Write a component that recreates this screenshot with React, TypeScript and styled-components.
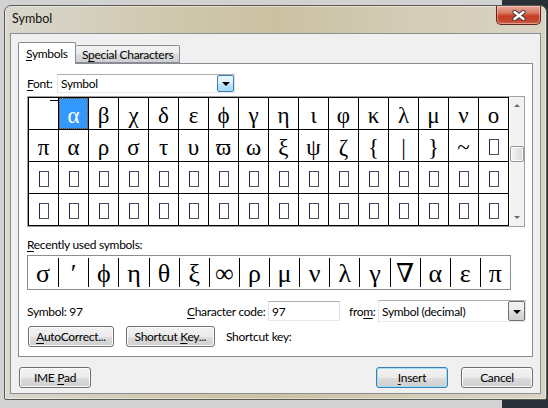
import React from 'react';
import styled, { createGlobalStyle } from 'styled-components';

const GlobalStyle = createGlobalStyle`
  html, body { margin: 0; padding: 0; }
  body {
    width: 548px;
    height: 408px;
    overflow: hidden;
    background: linear-gradient(to right, #d2d2d2 0, #d2d2d2 502px, #2a3038 502px);
    font-family: "Segoe UI", Lato, "Noto Sans", sans-serif;
    font-size: 12px;
    letter-spacing: -0.3px;
    color: #000;
  }
  * { box-sizing: border-box; }
`;

const Window = styled.div`
  margin: 5px 0 0 4px;
  width: 543px;
  height: 395px;
  border: 1px solid #5a5a52;
  border-radius: 7px 7px 2px 2px;
  background: linear-gradient(to right, #d9d7cf 0%, #d0c8ad 30%, #cbc1a2 50%, #d3ccb6 75%, #d8d3c3 100%);
  padding: 0 5px 5px 5px;
  display: flex;
  flex-direction: column;
  box-shadow: inset 0 0 0 1px rgba(255, 255, 255, 0.45);
`;

const TitleBar = styled.div`
  height: 27px;
  display: flex;
  justify-content: space-between;
  align-items: flex-start;
`;

const Title = styled.div`
  padding: 5px 0 0 2px;
  font-size: 12.5px;
  letter-spacing: 0;
  color: #111;
`;

const CloseButton = styled.div`
  width: 45px;
  height: 19px;
  border: 1px solid #5e2418;
  border-top: none;
  border-radius: 0 0 5px 5px;
  background: linear-gradient(#e9ab9b 0%, #d87561 40%, #c63d22 55%, #c24a31 85%, #d66e55 100%);
  box-shadow: inset 0 0 0 1px rgba(255, 220, 210, 0.45);
  display: flex;
  align-items: center;
  justify-content: center;
`;

const Client = styled.div`
  flex: 1;
  border: 1px solid #8b8e92;
  background: #f0f0f0;
  padding: 8px 7px 0 7px;
  display: flex;
  flex-direction: column;
`;

const TabStrip = styled.div`
  display: flex;
  align-items: flex-end;
  height: 21px;
  position: relative;
  z-index: 1;
`;

const Tab = styled.div<{ $active?: boolean }>`
  height: ${p => (p.$active ? 22 : 18)}px;
  margin-bottom: ${p => (p.$active ? -1 : 0)}px;
  padding: ${p => (p.$active ? '3px 0 0 7px' : '1px 0 0 6px')};
  width: ${p => (p.$active ? 58 : 104)}px;
  border: 1px solid #898c95;
  border-bottom: ${p => (p.$active ? 'none' : '1px solid #898c95')};
  border-left: ${p => (p.$active ? '1px solid #898c95' : 'none')};
  border-radius: 2px 2px 0 0;
  background: ${p => (p.$active ? '#ffffff' : 'linear-gradient(#f3f3f3, #ebebeb 50%, #dddddd 51%, #cfcfcf)')};
  white-space: nowrap;
`;

const Panel = styled.div`
  height: 294px;
  border: 1px solid #898c95;
  background: #fff;
  padding: 10px 0 0 8px;
  display: flex;
  flex-direction: column;
`;

const U = styled.span`
  text-decoration: underline;
  text-underline-offset: 2px;
`;

const FontRow = styled.div`
  display: flex;
  align-items: center;
  height: 19px;
`;

const FieldLabel = styled.div<{ $w: number }>`
  width: ${p => p.$w}px;
  white-space: nowrap;
`;

const Combo = styled.div<{ $w: number; $h: number }>`
  width: ${p => p.$w}px;
  height: ${p => p.$h}px;
  border: 1px solid #abadb3;
  border-color: #abadb3 #dbdfe6 #e3e9ef #e2e3ea;
  background: #fff;
  display: flex;
  align-items: center;
  padding-left: 3px;
  justify-content: space-between;
`;

const DropButton = styled.div<{ $hot?: boolean }>`
  width: 17px;
  height: 100%;
  border: 1px solid ${p => (p.$hot ? '#3c7fb1' : '#707070')};
  border-radius: 2px;
  background: ${p =>
    p.$hot
      ? 'linear-gradient(#eaf6fd, #d9f0fc 50%, #bee6fd 51%, #a7d9f5)'
      : 'linear-gradient(#f2f2f2, #ebebeb 50%, #dddddd 51%, #cfcfcf)'};
  display: flex;
  align-items: center;
  justify-content: center;
`;

const Arrow = styled.div`
  width: 0;
  height: 0;
  border-left: 4px solid transparent;
  border-right: 4px solid transparent;
  border-top: 4px solid #000;
  margin-top: 1px;
`;

const GridBox = styled.div`
  margin-top: 3px;
  width: 498px;
  height: 131px;
  border: 1px solid #a0a0a0;
  display: flex;
`;

const CharGrid = styled.div`
  display: grid;
  grid-template-columns: repeat(16, 29px);
  grid-template-rows: repeat(4, 31px);
  gap: 1px;
  padding: 1px;
  background: #000;
  height: 129px;
`;

const Cell = styled.div<{ $selected?: boolean; $corner?: boolean }>`
  background: ${p => (p.$selected ? '#3399ff' : '#fff')};
  color: ${p => (p.$selected ? '#fff' : '#000')};
  border: ${p => (p.$selected ? '1px dotted #7a4a10' : 'none')};
  display: flex;
  align-items: ${p => (p.$corner ? 'flex-start' : 'center')};
  justify-content: ${p => (p.$corner ? 'flex-end' : 'center')};
  padding-top: ${p => (p.$corner ? 2 : 3)}px;
  font-family: "Liberation Serif", "DejaVu Serif", serif;
  font-size: 23px;
  letter-spacing: 0;
  line-height: 1;
`;

/* the radical-extender glyph: a short rule along the top edge */
const RadicalExtender = styled.span`
  display: block;
  width: 8px;
  height: 0;
  border-top: 1px solid #000;
`;

const NoGlyph = styled.span`
  display: block;
  width: 10px;
  height: 16px;
  border: 1px solid #4a4768;
  border-left-color: #2b2450;
  border-bottom-color: #5b4f3a;
`;

const ScrollBar = styled.div`
  width: 15px;
  margin-left: 1px;
  background: #f2f2f2;
  display: flex;
  flex-direction: column;
  align-items: stretch;
`;

const ScrollArrow = styled.div<{ $down?: boolean }>`
  height: 17px;
  display: flex;
  align-items: center;
  justify-content: center;
  &::after {
    content: '';
    width: 0;
    height: 0;
    border-left: 3px solid transparent;
    border-right: 3px solid transparent;
    ${p => (p.$down ? 'border-top: 3px solid #6b6b6b;' : 'border-bottom: 3px solid #6b6b6b;')}
  }
`;

const ScrollTrack = styled.div`
  flex: 1;
  display: flex;
  flex-direction: column;
`;

const Thumb = styled.div`
  height: 16px;
  border: 1px solid #979797;
  border-radius: 2px;
  background: linear-gradient(to right, #f4f4f4, #e8e8e8 50%, #d6d6d6);
  box-shadow: inset 0 0 0 1px #fcfcfc;
`;

const SectionLabel = styled.div`
  margin-top: 10px;
  height: 16px;
  line-height: 16px;
`;

const RecentBox = styled.div`
  margin-top: 2px;
  width: 484px;
  height: 35px;
  border: 1px solid #8e8e8e;
  display: grid;
  grid-template-columns: repeat(16, 1fr);
  padding: 2px 0;
`;

const RecentCell = styled.div<{ $first?: boolean }>`
  border-left: ${p => (p.$first ? 'none' : '1px solid #000')};
  display: flex;
  align-items: center;
  justify-content: center;
  padding-top: 2px;
  font-family: "Liberation Serif", "DejaVu Serif", serif;
  font-size: 26px;
  letter-spacing: 0;
  line-height: 1;
`;

const InfoRow = styled.div`
  margin-top: 10px;
  height: 22px;
  display: flex;
  align-items: center;
`;

const TextInput = styled.div<{ $w: number }>`
  width: ${p => p.$w}px;
  height: 20px;
  border: 1px solid #abadb3;
  border-color: #abadb3 #dbdfe6 #e3e9ef #e2e3ea;
  background: #fff;
  padding-left: 3px;
  display: flex;
  align-items: center;
  margin-right: 9px;
`;

const ButtonRow = styled.div`
  margin-top: 4px;
  height: 21px;
  display: flex;
  align-items: center;
`;

const Button = styled.div<{ $w: number; $default?: boolean; $gap?: number; $left?: number }>`
  width: ${p => p.$w}px;
  height: 21px;
  margin-right: ${p => p.$gap ?? 0}px;
  margin-left: ${p => p.$left ?? 0}px;
  border: 1px solid ${p => (p.$default ? '#3c7fb1' : '#707070')};
  border-radius: 3px;
  background: linear-gradient(#f2f2f2 0%, #ebebeb 50%, #dddddd 51%, #cfcfcf 100%);
  box-shadow: inset 0 0 0 1px ${p => (p.$default ? '#9fdff8' : '#fbfbfb')};
  display: flex;
  align-items: center;
  justify-content: center;
  white-space: nowrap;
`;

const Footer = styled.div`
  margin-top: 10px;
  padding-left: 1px;
  display: flex;
  align-items: center;
`;

const Spacer = styled.div`
  flex: 1;
`;

const row1 = ['', 'α', 'β', 'χ', 'δ', 'ε', 'ϕ', 'γ', 'η', 'ι', 'φ', 'κ', 'λ', 'μ', 'ν', 'ο'];
const row2 = ['π', 'α', 'ρ', 'σ', 'τ', 'υ', 'ϖ', 'ω', 'ξ', 'ψ', 'ζ', '{', '|', '}', '~', null];
const recent = ['σ', '′', 'ϕ', 'η', 'θ', 'ξ', '∞', 'ρ', 'μ', 'ν', 'λ', 'γ', '∇', 'α', 'ε', 'π'];

const cells: (string | null)[] = [...row1, ...row2, ...Array(32).fill(null)];

export default function App() {
  return (
    <>
      <GlobalStyle />
      <Window>
        <TitleBar>
          <Title>Symbol</Title>
          <CloseButton>
            <svg width="14" height="11" viewBox="0 0 14 11">
              <path d="M2.5 2 L11.5 9 M11.5 2 L2.5 9" stroke="#3a3a3a" strokeWidth="4.2" strokeLinecap="round" />
              <path d="M2.5 2 L11.5 9 M11.5 2 L2.5 9" stroke="#ffffff" strokeWidth="2.4" strokeLinecap="round" />
            </svg>
          </CloseButton>
        </TitleBar>
        <Client>
          <TabStrip>
            <Tab $active>
              <U>S</U>ymbols
            </Tab>
            <Tab>
              S<U>p</U>ecial Characters
            </Tab>
          </TabStrip>
          <Panel>
            <FontRow>
              <FieldLabel $w={30}>
                <U>F</U>ont:
              </FieldLabel>
              <Combo $w={178} $h={19}>
                <span>Symbol</span>
                <DropButton $hot>
                  <Arrow />
                </DropButton>
              </Combo>
            </FontRow>
            <GridBox>
              <CharGrid>
                {cells.map((c, i) =>
                  i === 0 ? (
                    <Cell key={i} $corner>
                      <RadicalExtender />
                    </Cell>
                  ) : (
                    <Cell key={i} $selected={i === 1}>
                      {c === null ? <NoGlyph /> : c}
                    </Cell>
                  )
                )}
              </CharGrid>
              <ScrollBar>
                <ScrollArrow />
                <ScrollTrack>
                  <div style={{ height: 32 }} />
                  <Thumb />
                </ScrollTrack>
                <ScrollArrow $down />
              </ScrollBar>
            </GridBox>
            <SectionLabel>
              <U>R</U>ecently used symbols:
            </SectionLabel>
            <RecentBox>
              {recent.map((c, i) => (
                <RecentCell key={i} $first={i === 0}>
                  {c}
                </RecentCell>
              ))}
            </RecentBox>
            <InfoRow>
              <FieldLabel $w={160}>Symbol: 97</FieldLabel>
              <FieldLabel $w={81}>
                <U>C</U>haracter code:
              </FieldLabel>
              <TextInput $w={72}>97</TextInput>
              <FieldLabel $w={29}>
                fro<U>m</U>:
              </FieldLabel>
              <Combo $w={148} $h={22}>
                <span>Symbol (decimal)</span>
                <DropButton>
                  <Arrow />
                </DropButton>
              </Combo>
            </InfoRow>
            <ButtonRow>
              <Button $w={86} $gap={12} $left={1}>
                <span>
                  <U>A</U>utoCorrect...
                </span>
              </Button>
              <Button $w={89} $gap={11}>
                <span>
                  Shortcut <U>K</U>ey...
                </span>
              </Button>
              <span>Shortcut key:</span>
            </ButtonRow>
          </Panel>
          <Footer>
            <Button $w={72}>
              <span>
                IME <U>P</U>ad
              </span>
            </Button>
            <Spacer />
            <Button $w={72} $default $gap={13}>
              <span>
                <U>I</U>nsert
              </span>
            </Button>
            <Button $w={72}>
              <span>Cancel</span>
            </Button>
          </Footer>
        </Client>
      </Window>
    </>
  );
}
